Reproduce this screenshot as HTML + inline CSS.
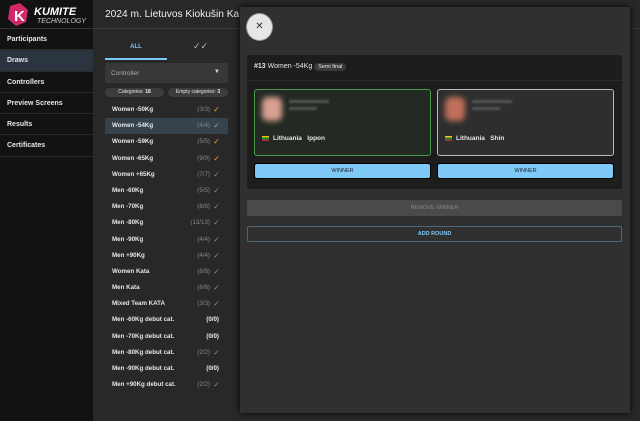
<!DOCTYPE html>
<html><head><meta charset="utf-8"><style>
*{box-sizing:border-box;margin:0;padding:0}
body{width:640px;height:421px;overflow:hidden;background:#282828;font-family:"Liberation Sans",sans-serif;color:#e6e6e6;position:relative}
.side{position:absolute;left:0;top:0;width:93px;height:421px;background:#121212}
.logo{height:29px;border-bottom:1px solid #333;position:relative}
.nav div{height:21.3px;border-bottom:1px solid #2a2a2a;font-size:7px;font-weight:bold;padding-left:7px;line-height:21px}
.nav .act{background:#2b3540}
.hdr{position:absolute;left:93px;top:0;right:0;height:29px;border-bottom:1px solid #3a3a3a;background:#282828}
.hdr span{position:absolute;left:12px;top:9px;font-size:10.2px;color:#eee}
.tabs{position:absolute;left:105px;top:38px;width:135px;height:22px}
.list{position:absolute;left:105px;top:102px;width:123px}
.row{height:16.2px;font-size:6.2px;font-weight:bold;padding-left:7px;line-height:16px;position:relative}
.row .c{position:absolute;right:18px;color:#888;font-weight:normal}
.row .k{position:absolute;right:8px;top:0;font-size:8px;color:#888;font-weight:normal}
.row .o{color:#f0a030}
.row .z{position:absolute;right:9px;color:#eee}
.modal{position:absolute;left:240px;top:7px;width:390px;height:406px;background:#303030;box-shadow:0 0 6px #000}
.close{position:absolute;left:246px;top:13px;width:27px;height:28px;border-radius:50%;background:#e6e6e6;border:1px solid #999;color:#333;text-align:center;line-height:26px;font-size:10px}
.card{position:absolute;left:247px;top:55px;width:375px;height:134px;background:#1d1d1d;border-radius:2px}
.fb{position:absolute;top:34px;width:177px;height:67px;border-radius:3px}
.btn{position:absolute;top:108px;width:177px;height:16px;background:#7ec9f5;border-radius:3px;color:#223;font-size:5.5px;text-align:center;line-height:14px;border:1px solid #000}
.flag{display:inline-block;width:7px;height:5px;background:linear-gradient(#f8c400 33%,#00844a 33% 66%,#c1272d 66%);margin-right:4px;vertical-align:middle}
.fn{position:absolute;left:7px;top:45px;font-size:6.5px;font-weight:bold}
.av{position:absolute;left:7px;top:7px;width:20px;height:24px;border-radius:6px;filter:blur(3px)}
.bl{position:absolute;left:34px;height:3px;background:#555;filter:blur(1px)}
</style></head><body>
<div class="side">
 <div class="logo">
  <svg width="90" height="28" viewBox="0 0 90 28" style="position:absolute;left:6px;top:2px"><polygon points="4,4 14,1 22,8 20,20 10,24 2,17" fill="#d02a6a"/><text x="8" y="19" font-family="Liberation Sans" font-weight="bold" font-size="15" fill="#fff">K</text><text x="28" y="13" font-family="Liberation Sans" font-weight="bold" font-style="italic" font-size="11" fill="#fff">KUMITE</text><text x="31" y="21" font-family="Liberation Sans" font-style="italic" font-size="7" fill="#ccc">TECHNOLOGY</text></svg>
 </div>
 <div class="nav"><div>Participants</div><div class="act">Draws</div><div>Controllers</div><div>Preview Screens</div><div>Results</div><div>Certificates</div></div>
</div>
<div class="hdr"><span>2024 m. Lietuvos Kiokušin Kara</span></div>
<div class="tabs"><div style="position:absolute;left:0;width:62px;text-align:center;top:6px;font-size:6px;font-weight:bold;color:#7ec9f5">ALL</div><div style="position:absolute;left:0;top:20px;width:62px;height:2px;background:#7ec9f5"></div><div style="position:absolute;left:88px;top:3px;font-size:9px;color:#bbb">✓✓</div></div>
<div style="position:absolute;left:105px;top:63px;width:123px;height:20px;background:#383838;border-radius:2px;font-size:6.5px;color:#aaa;padding:7px 0 0 6px">Controller<span style="position:absolute;right:8px;top:6px;font-size:6px;color:#ddd">▼</span></div>
<div style="position:absolute;left:105px;top:88px;width:59px;height:9px;background:#3c3c3c;border-radius:5px;font-size:5px;text-align:center;line-height:9px">Categories: <b>18</b></div>
<div style="position:absolute;left:168px;top:88px;width:60px;height:9px;background:#3c3c3c;border-radius:5px;font-size:5px;text-align:center;line-height:9px">Empty categories: <b>3</b></div>
<div class="list">
<div class="row">Women -50Kg<span class="c">(3/3)</span><span class="k o">✓</span></div>
<div class="row" style="background:#36434d">Women -54Kg<span class="c">(4/4)</span><span class="k" style="color:#6cbf6c">✓</span></div>
<div class="row">Women -59Kg<span class="c">(5/5)</span><span class="k o">✓</span></div>
<div class="row">Women -65Kg<span class="c">(9/9)</span><span class="k o">✓</span></div>
<div class="row">Women +65Kg<span class="c">(7/7)</span><span class="k">✓</span></div>
<div class="row">Men -60Kg<span class="c">(5/5)</span><span class="k">✓</span></div>
<div class="row">Men -70Kg<span class="c">(8/8)</span><span class="k">✓</span></div>
<div class="row">Men -80Kg<span class="c">(13/13)</span><span class="k">✓</span></div>
<div class="row">Men -90Kg<span class="c">(4/4)</span><span class="k">✓</span></div>
<div class="row">Men +90Kg<span class="c">(4/4)</span><span class="k">✓</span></div>
<div class="row">Women Kata<span class="c">(8/8)</span><span class="k">✓</span></div>
<div class="row">Men Kata<span class="c">(6/6)</span><span class="k">✓</span></div>
<div class="row">Mixed Team KATA<span class="c">(3/3)</span><span class="k">✓</span></div>
<div class="row">Men -60Kg debut cat.<span class="z">(0/0)</span></div>
<div class="row">Men -70Kg debut cat.<span class="z">(0/0)</span></div>
<div class="row">Men -80Kg debut cat.<span class="c">(2/2)</span><span class="k">✓</span></div>
<div class="row">Men -90Kg debut cat.<span class="z">(0/0)</span></div>
<div class="row">Men +90Kg debut cat.<span class="c">(2/2)</span><span class="k">✓</span></div>
</div>
<div class="modal"></div>
<div class="close">✕</div>
<div class="card">
 <div style="position:absolute;left:7px;top:8px;font-size:7px;font-weight:bold">#13 <span style="font-weight:normal">Women -54Kg</span> <span style="background:#3a3a3a;border-radius:5px;padding:1px 4px;font-size:5.5px;font-weight:normal">Semi final</span></div>
 <div style="position:absolute;left:0;right:0;top:25px;height:1px;background:#2c2c2c"></div>
 <div class="fb" style="left:7px;background:#232923;border:1px solid #4a9a4a"><div class="av" style="background:#d8a090"></div><div class="bl" style="top:10px;width:40px"></div><div class="bl" style="top:17px;width:28px"></div><div class="fn"><span class="flag"></span>Lithuania &nbsp; Ippon</div></div>
 <div class="fb" style="left:190px;background:#2e2e2e;border:1px solid #bbb"><div class="av" style="background:#c0705a"></div><div class="bl" style="top:10px;width:40px"></div><div class="bl" style="top:17px;width:28px"></div><div class="fn"><span class="flag"></span>Lithuania &nbsp; Shin</div></div>
 <div class="btn" style="left:7px">WINNER</div>
 <div class="btn" style="left:190px">WINNER</div>
</div>
<div style="position:absolute;left:247px;top:200px;width:375px;height:16px;background:#4a4a4a;border-radius:2px;font-size:5.5px;color:#888;text-align:center;line-height:16px">REMOVE WINNER</div>
<div style="position:absolute;left:247px;top:226px;width:375px;height:16px;border:1px solid #4a6878;border-radius:2px;font-size:5.5px;font-weight:bold;color:#7ec9f5;text-align:center;line-height:14px">ADD ROUND</div>
</body></html>
